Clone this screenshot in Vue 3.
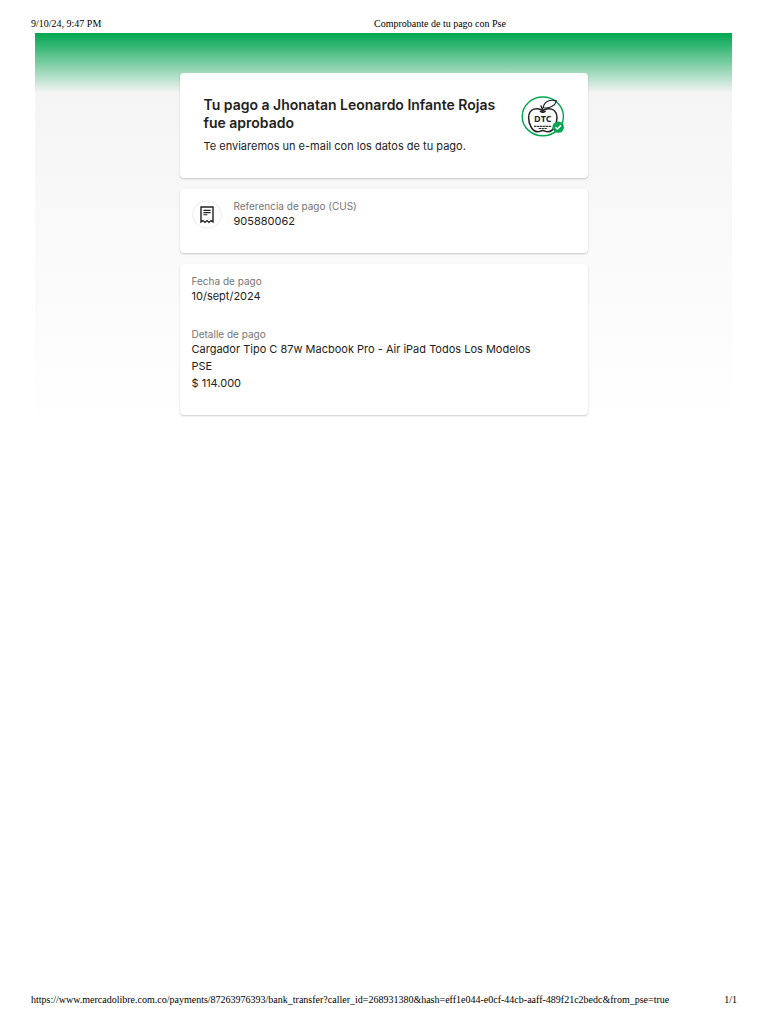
<template>
  <div class="page">
    <header class="print-line">
      <span class="print-line__date">9/10/24, 9:47 PM</span>
      <span class="print-line__title">Comprobante de tu pago con Pse</span>
    </header>

    <main class="receipt">
      <section class="card card--status">
        <div>
          <h1>Tu pago a Jhonatan Leonardo Infante Rojas fue aprobado</h1>
          <p>Te enviaremos un e-mail con los datos de tu pago.</p>
        </div>
        <svg class="logo" viewBox="0 0 44 42" role="img" aria-label="DTC">
          <ellipse cx="22.8" cy="20.4" rx="20.6" ry="19.4" fill="#fff" stroke="#00a650" stroke-width="1.4" />
          <g fill="none" stroke="#222" stroke-width="1.5" stroke-linecap="round">
            <path d="M22.8 14.6C18 11.2 8.8 11.8 8.6 21.6C8.6 29 12.6 35.2 17.4 35.8C19.8 36 20.8 34.4 22.8 34.4C24.8 34.4 25.8 36 28.2 35.8C33 35.2 37 29 37 21.6C36.8 11.8 27.6 11.2 22.8 14.6Z" />
            <path d="M22.8 16C23 13.8 22.4 12 21 10" />
            <path d="M20.4 15.4Q22.8 17 25.2 15.4" />
            <path d="M23.4 11.8C23.6 6.4 29 3 36.6 4.8C35 10 29.6 12.6 23.4 11.8Z" stroke-width="1.1" />
          </g>
          <text class="logo__name" x="22.8" y="26" text-anchor="middle">DTC</text>
          <path d="M14 30.3H31.6M18.6 32.5H27" stroke="#333" stroke-width="1.2" stroke-dasharray="2.4 .5" />
          <ellipse cx="38.2" cy="31.2" rx="5.8" ry="5.6" fill="#00a650" />
          <path d="M35.4 31.2L37.4 33L41 29.4" fill="none" stroke="#fff" stroke-width="1.5" />
        </svg>
      </section>

      <section class="card card--reference">
        <svg class="ticket" viewBox="0 0 30 30" aria-hidden="true">
          <ellipse cx="15" cy="14.6" rx="14.4" ry="13.6" fill="#fff" stroke="#ececec" stroke-width="1" />
          <path d="M9 22V7H21V22L19 20.6L17 22.4L15 20.6L13 22.4L11 20.6Z" fill="none" stroke="#222" stroke-width="1.4" />
          <path d="M11.4 10.4H18.6M11.4 12.6H18.6M11.4 14.8H15.4" stroke="#222" stroke-width="1.1" />
        </svg>
        <dl>
          <dt>Referencia de pago (CUS)</dt>
          <dd>905880062</dd>
        </dl>
      </section>

      <section class="card card--detail">
        <dl v-for="item in details" :key="item.label">
          <dt>{{ item.label }}</dt>
          <dd v-for="line in item.lines" :key="line">{{ line }}</dd>
        </dl>
      </section>
    </main>

    <footer class="print-line print-line--bottom">
      <span>{{ url }}</span>
      <span>1/1</span>
    </footer>
  </div>
</template>

<script setup>
const url =
  "https://www.mercadolibre.com.co/payments/87263976393/bank_transfer?caller_id=268931380&hash=eff1e044-e0cf-44cb-aaff-489f21c2bedc&from_pse=true";

const details = [
  { label: "Fecha de pago", lines: ["10/sept/2024"] },
  {
    label: "Detalle de pago",
    lines: [
      "Cargador Tipo C 87w Macbook Pro - Air iPad Todos Los Modelos",
      "PSE",
      "$ 114.000",
    ],
  },
];
</script>

<style>
body {
  margin: 0;
  background: #fff;
}
</style>

<style scoped>
.page {
  display: flex;
  flex-direction: column;
  min-height: 100vh;
  font-family: Inter, "Liberation Sans", sans-serif;
  color: #222;
}
.print-line {
  display: flex;
  padding: 18px 31px 3px;
  font-family: "Liberation Serif", serif;
  font-size: 10px;
  line-height: 12px;
  color: #000;
}
.print-line__date {
  width: 112px;
}
.print-line__title {
  flex: 1;
  text-align: center;
}
.print-line--bottom {
  justify-content: space-between;
  margin-top: auto;
  padding: 0 31px 18px;
}
.receipt {
  display: flex;
  flex-direction: column;
  align-items: center;
  gap: 11px;
  margin: 0 36px 0 35px;
  padding: 40px 0 14px;
  background: linear-gradient(#00a650, rgba(0, 166, 80, 0)) top / 100% 60px
      no-repeat,
    linear-gradient(#f3f3f3, #fff);
}
.card {
  box-sizing: border-box;
  display: flex;
  width: 100%;
  max-width: 408px;
  border-radius: 4px;
  background: #fff;
  box-shadow: 0 1px 2px rgba(0, 0, 0, 0.2);
}
.card--status {
  justify-content: space-between;
  padding: 23px 24px;
}
.card--reference {
  gap: 12px;
  padding: 11px 12px 23px;
}
.card--detail {
  flex-direction: column;
  gap: 23px;
  padding: 11px 12px 23px;
}
h1 {
  max-width: 300px;
  margin: 0 0 6px;
  font-size: 14px;
  font-weight: 600;
  line-height: 18px;
}
p {
  margin: 0;
  font-size: 11px;
  line-height: 17px;
}
dl {
  margin: 0;
}
dt {
  font-size: 10px;
  line-height: 13px;
  color: #757575;
}
dd {
  margin: 0;
  font-size: 11px;
  line-height: 17px;
}
.logo {
  flex: none;
  width: 44px;
  height: 42px;
}
.logo__name {
  font-family: "Open Sans", sans-serif;
  font-size: 9px;
  font-weight: 700;
  fill: #222;
}
.ticket {
  flex: none;
  width: 30px;
  height: 30px;
}
</style>
